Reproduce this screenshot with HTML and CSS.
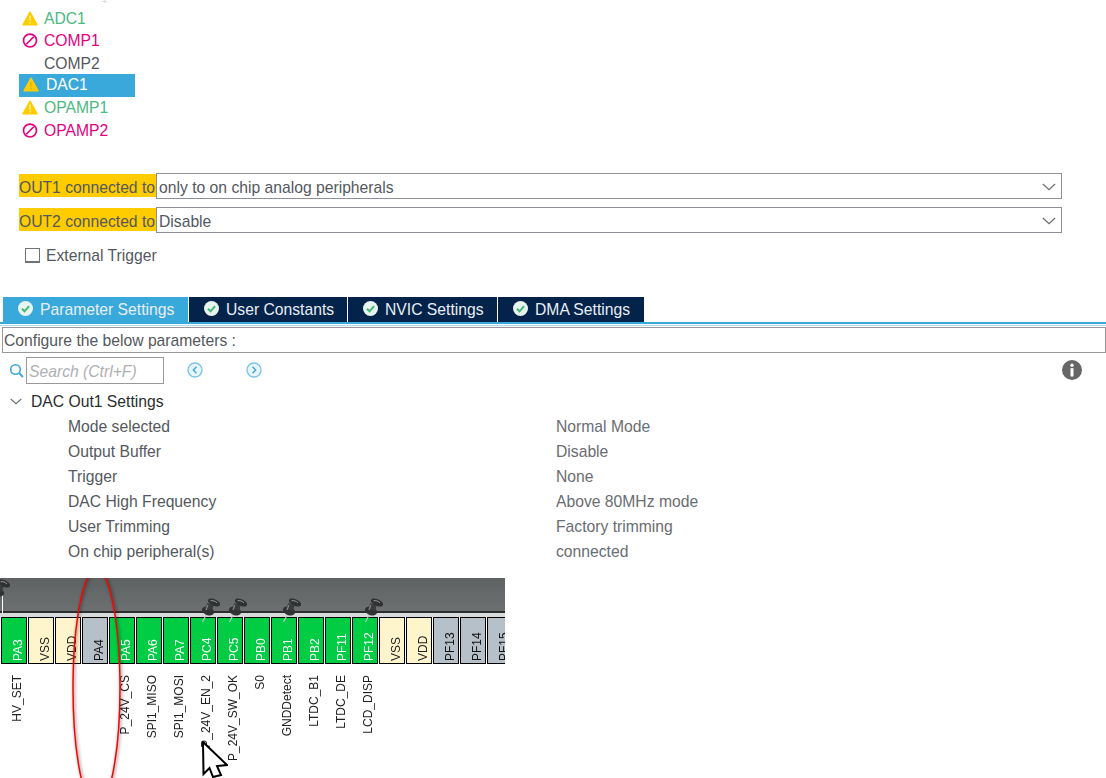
FILE: index.html
```html
<!DOCTYPE html>
<html lang="en">
<head>
<meta charset="utf-8">
<title>DAC1 Configuration</title>
<link rel="stylesheet" href="styles.css">
</head>
<body>
<svg class="defs" width="0" height="0" aria-hidden="true">
  <defs>
    <symbol id="warn" viewBox="0 0 16 15"><path d="M8 1.200 15 13.800H1Z" fill="#ffcc00" stroke="#ffcc00" stroke-width="1.400" stroke-linejoin="round"/><path d="M7.300 4.800h1.400l-.2 5.400h-1Z M7.300 11h1.400v1.600H7.300Z" fill="#fff6c4"/></symbol>
    <symbol id="warn-sel" viewBox="0 0 16 15"><path d="M8 1.200 15 13.800H1Z" fill="#ffcc00" stroke="#ffcc00" stroke-width="1.400" stroke-linejoin="round"/><path d="M7.500 5h1l-.1 5.200h-.8Z M7.500 11h1v1.500h-1Z" fill="#b9a94c"/></symbol>
    <symbol id="ban" viewBox="0 0 16 16"><circle cx="8" cy="8" r="6.900" fill="none" stroke="#e6007e" stroke-width="1.800"/><path d="M4 12 12 4" stroke="#e6007e" stroke-width="1.800"/></symbol>
    <symbol id="ok" viewBox="0 0 16 16"><circle cx="8" cy="8" r="8" fill="#e8f4ee"/><path d="M4.200 8.200 7 11 11.800 5.400" fill="none" stroke="#45b97c" stroke-width="2.200"/></symbol>
    <symbol id="chev" viewBox="0 0 16 9"><path d="M1 1.200 8 7.500 15 1.200" fill="none" stroke="#6d6f72" stroke-width="1.500"/></symbol>
    <symbol id="pin" viewBox="0 0 20 25"><path d="M5.500 16 1.500 24" stroke="#c4c4c4" stroke-width="1.300"/><ellipse cx="7" cy="13" rx="6.300" ry="4.200" transform="rotate(20 7 13)" fill="#303132"/><path d="M6.500 5 12.500 7.500 11 13 4 11Z" fill="#3a3b3c"/><ellipse cx="13" cy="4.500" rx="6.500" ry="3.300" transform="rotate(25 13 4.500)" fill="#2f3031"/><path d="M9.500 2.800c2-.6 5 .4 6.500 2" stroke="#9a9b9c" stroke-width="1" fill="none"/><path d="M6.800 7 5 12" stroke="#85878a" stroke-width="1.200"/></symbol>
  </defs>
</svg>

<i class="crumb"></i>

<ul class="ip-list">
  <li class="ip ip-warn"><svg class="ip-icon"><use href="#warn"/></svg>ADC1</li>
  <li class="ip ip-ban"><svg class="ip-icon"><use href="#ban"/></svg>COMP1</li>
  <li class="ip ip-plain"><span class="ip-icon"></span>COMP2</li>
  <li class="ip ip-selected"><svg class="ip-icon"><use href="#warn-sel"/></svg>DAC1</li>
  <li class="ip ip-warn"><svg class="ip-icon"><use href="#warn"/></svg>OPAMP1</li>
  <li class="ip ip-ban"><svg class="ip-icon"><use href="#ban"/></svg>OPAMP2</li>
</ul>

<section class="mode">
  <div class="mode-row">
    <span class="mode-label">OUT1 connected to</span>
    <div class="select"><span>only to on chip analog peripherals</span><svg class="select-chev"><use href="#chev"/></svg></div>
  </div>
  <div class="mode-row">
    <span class="mode-label">OUT2 connected to</span>
    <div class="select"><span>Disable</span><svg class="select-chev"><use href="#chev"/></svg></div>
  </div>
  <label class="check"><span class="check-box"></span>External Trigger</label>
</section>

<nav class="tabs">
  <div class="tab tab-active"><svg class="tab-icon"><use href="#ok"/></svg>Parameter Settings</div>
  <div class="tab tab-user"><svg class="tab-icon"><use href="#ok"/></svg>User Constants</div>
  <div class="tab tab-nvic"><svg class="tab-icon"><use href="#ok"/></svg>NVIC Settings</div>
  <div class="tab tab-dma"><svg class="tab-icon"><use href="#ok"/></svg>DMA Settings</div>
</nav>
<div class="tab-rule"></div>

<div class="config-box">Configure the below parameters :</div>

<div class="search-bar">
  <svg class="search-icon" viewBox="0 0 15 15"><circle cx="6.500" cy="6.500" r="4.800" fill="none" stroke="#39a9dc" stroke-width="1.600"/><path d="M10 10 14 14" stroke="#39a9dc" stroke-width="1.800"/></svg>
  <div class="search-input">Search (Ctrl+F)</div>
  <svg class="nav-icon nav-prev" viewBox="0 0 16 16"><circle cx="8" cy="8" r="7" fill="#e9f5fb" stroke="#7cc6e8" stroke-width="1.400"/><path d="M9.500 4.800 6.300 8l3.200 3.200" fill="none" stroke="#39a9dc" stroke-width="1.400"/></svg>
  <svg class="nav-icon nav-next" viewBox="0 0 16 16"><circle cx="8" cy="8" r="7" fill="#e9f5fb" stroke="#7cc6e8" stroke-width="1.400"/><path d="M6.500 4.800 9.700 8l-3.200 3.200" fill="none" stroke="#39a9dc" stroke-width="1.400"/></svg>
  <svg class="info-icon" viewBox="0 0 20 20"><circle cx="10" cy="10" r="10" fill="#666"/><circle cx="10" cy="5.200" r="1.700" fill="#fff"/><rect x="8.500" y="8.200" width="3" height="8.300" fill="#fff"/></svg>
</div>

<div class="tree-head"><svg class="tree-chev"><use href="#chev"/></svg>DAC Out1 Settings</div>
<dl class="params">
  <dt>Mode selected</dt><dd>Normal Mode</dd>
  <dt>Output Buffer</dt><dd>Disable</dd>
  <dt>Trigger</dt><dd>None</dd>
  <dt>DAC High Frequency</dt><dd>Above 80MHz mode</dd>
  <dt>User Trimming</dt><dd>Factory trimming</dd>
  <dt>On chip peripheral(s)</dt><dd>connected</dd>
</dl>

<section class="chip">
  <div class="die"></div>
  <div class="die-edge"></div>
  <div class="pins">
    <div class="pin pin-on">PA3</div>
    <div class="pin pin-pwr">VSS</div>
    <div class="pin pin-pwr">VDD</div>
    <div class="pin pin-off">PA4</div>
    <div class="pin pin-on">PA5</div>
    <div class="pin pin-on">PA6</div>
    <div class="pin pin-on">PA7</div>
    <div class="pin pin-on">PC4</div>
    <div class="pin pin-on">PC5</div>
    <div class="pin pin-on">PB0</div>
    <div class="pin pin-on">PB1</div>
    <div class="pin pin-on">PB2</div>
    <div class="pin pin-on">PF11</div>
    <div class="pin pin-on">PF12</div>
    <div class="pin pin-pwr">VSS</div>
    <div class="pin pin-pwr">VDD</div>
    <div class="pin pin-off">PF13</div>
    <div class="pin pin-off">PF14</div>
    <div class="pin pin-off">PF15</div>
  </div>
  <div class="labels">
    <span class="label">HV_SET</span>
    <span class="label"></span>
    <span class="label"></span>
    <span class="label"></span>
    <span class="label">P_24V_CS</span>
    <span class="label">SPI1_MISO</span>
    <span class="label">SPI1_MOSI</span>
    <span class="label">P_24V_EN_2</span>
    <span class="label">P_24V_SW_OK</span>
    <span class="label">S0</span>
    <span class="label">GNDDetect</span>
    <span class="label">LTDC_B1</span>
    <span class="label">LTDC_DE</span>
    <span class="label">LCD_DISP</span>
  </div>
  <i class="die-mark"></i>
  <svg class="pushpin pp-0"><use href="#pin"/></svg>
  <svg class="pushpin pp-1"><use href="#pin"/></svg>
  <svg class="pushpin pp-2"><use href="#pin"/></svg>
  <svg class="pushpin pp-3"><use href="#pin"/></svg>
  <svg class="pushpin pp-4"><use href="#pin"/></svg>
</section>

<svg class="annotation" viewBox="0 0 200 200">
  <ellipse cx="97.500" cy="110" rx="23.500" ry="118.500" fill="none" stroke="#000" stroke-opacity=".28" stroke-width="3" class="ring-shadow"/>
  <ellipse cx="96.500" cy="110" rx="23.500" ry="118.500" fill="none" stroke="#f00" stroke-width="1.500"/>
</svg>

<svg class="cursor" viewBox="0 0 26 37"><path d="M1 1 25 24 15 25 19 34 11 36 7.500 27 1.500 33Z" fill="#fff" stroke="#000" stroke-width="2"/></svg>
</body>
</html>
```

FILE: styles.css
```css
* { box-sizing: border-box; }
html, body { margin: 0; padding: 0; }
body {
  position: relative;
  width: 1106px;
  height: 778px;
  overflow: hidden;
  background: #fff;
  color: #54585e;
  font: 15.700px/1.2 "Liberation Sans", Arial, sans-serif;
}
.defs { position: absolute; }
.crumb { position: absolute; left: 102px; top: 0; width: 5px; height: 3px; background: linear-gradient(#ddd, #ddd) center / 1px 100% no-repeat, linear-gradient(#ddd, #ddd) center 1px / 100% 1px no-repeat; }

.ip-list { list-style: none; margin: 0 0 0 19px; padding: 8px 0 0; width: 116px; }
.ip { display: flex; align-items: center; height: 22.400px; padding-left: 3px; }
.ip-icon { width: 16px; height: 15px; margin: 0 6px 2px 0; flex: none; }
.ip-warn { color: #4cb97f; }
.ip-ban { color: #e6007e; }
.ip-plain { color: #54585e; }
.ip-selected { background: #39a9dc; color: #fff; padding: 1px 0 0 4px; margin: -1px 0 1px; }
.ip-selected .ip-icon { margin-right: 7px; }

.mode { margin: 30.600px 0 0 19px; }
.mode-row { display: flex; align-items: center; height: 26px; margin-bottom: 8px; width: 1043px; }
.mode-label { background: #ffcc00; width: 137px; height: 23px; line-height: 28px; white-space: nowrap; flex: none; }
.select {
  flex: 1;
  height: 26px;
  border: 1.500px solid #8d9096;
  padding: 4px 0 0 2px;
  display: flex;
  justify-content: space-between;
  align-items: center;
}
.select-chev { width: 14px; height: 8px; margin: 0 5px 2px 0; }
.check { display: flex; align-items: center; height: 24px; margin: 11px 0 0 6px; }
.check-box { width: 15px; height: 15px; border: 1.500px solid #6f7276; border-bottom-width: 2px; margin-right: 6px; background: #fff; }

.tabs { display: flex; margin: 29px 0 0 3px; height: 25px; gap: 1px; }
.tab { display: flex; align-items: center; background: #03234b; color: #e8eef4; padding: 2px 0 0 15px; white-space: nowrap; }
.tab-active { background: #39a9dc; width: 185px; }
.tab-user { width: 158px; }
.tab-nvic { width: 149px; }
.tab-dma { width: 146px; }
.tab-icon { width: 15px; height: 15px; margin: 0 7px 3px 0; flex: none; }
.tab-rule { height: 4px; border-top: 2px solid #39a9dc; border-bottom: 1px solid #b5dcef; }

.config-box { height: 26px; margin: 1px 0 0 2px; border: 1.500px solid #999; padding-left: 1px; line-height: 25px; color: #54585e; }

.search-bar { display: flex; align-items: center; height: 27px; margin-top: 4px; padding-left: 9px; }
.search-icon { width: 15px; height: 15px; flex: none; }
.search-input {
  width: 138px;
  height: 27px;
  margin-left: 2px;
  border: 1.500px solid #999;
  padding-left: 2px;
  line-height: 27px;
  font-style: italic;
  color: #aeb0b3;
}
.nav-icon { width: 16px; height: 16px; flex: none; }
.nav-prev { margin-left: 23px; }
.nav-next { margin-left: 43px; }
.info-icon { width: 20px; height: 20px; margin-left: 800px; flex: none; }

.tree-head { display: flex; align-items: center; height: 20px; margin: 8px 0 0 10px; color: #2b2d30; }
.tree-chev { width: 12px; height: 7px; margin-right: 9px; }
.params { display: grid; grid-template-columns: 488px 1fr; grid-auto-rows: 25px; margin: 2px 0 0 68px; }
.params dt, .params dd { margin: 0; line-height: 25px; }
.params dd { color: #6a6d72; }

.chip { position: relative; width: 505px; height: 200px; margin-top: 14.500px; overflow: hidden; }
.die { height: 35px; background: linear-gradient(#5f6263, #6d7071); border-bottom: 2px solid #2c2e2f; }
.die-edge { height: 4px; background: #d8d9d9; }
.pins { display: flex; width: 520px; padding-left: 0.500px; gap: 1px; }
.pin {
  width: 26px;
  height: 47px;
  flex: none;
  border: 1px solid #000;
  font-size: 12px;
  line-height: 12px;
  writing-mode: vertical-rl;
  rotate: 180deg;
  padding: 2px 7px 0 0;
  display: flex;
  align-items: center;
  justify-content: flex-start;
}
.pin-on { background: #00cc44; color: #fff; }
.pin-pwr { background: #fff5cc; color: #222; }
.pin-off { background: #b6c0c8; color: #111; }
.labels { display: flex; align-items: flex-start; margin-top: 11px; }
.label {
  display: block;
  width: 27px;
  flex: none;
  font-size: 12px;
  line-height: 12px;
  writing-mode: vertical-rl;
  rotate: 180deg;
  padding-right: 11px;
  color: #222;
  white-space: nowrap;
}
.label:empty { height: 10px; }
.die-mark { position: absolute; left: 2px; top: 12px; width: 1px; height: 23px; background: #fff; }
.pushpin { position: absolute; width: 20px; height: 25px; top: 20px; }
.pp-0 { left: -9px; top: 1px; }
.pp-1 { left: 201px; }
.pp-2 { left: 228px; }
.pp-3 { left: 282px; }
.pp-4 { left: 364px; }

.annotation { position: absolute; left: 0; top: 578px; width: 200px; height: 200px; overflow: hidden; }
.ring-shadow { filter: blur(1.500px); }
.cursor { position: absolute; left: 202px; top: 741px; width: 26px; height: 37px; }
```
